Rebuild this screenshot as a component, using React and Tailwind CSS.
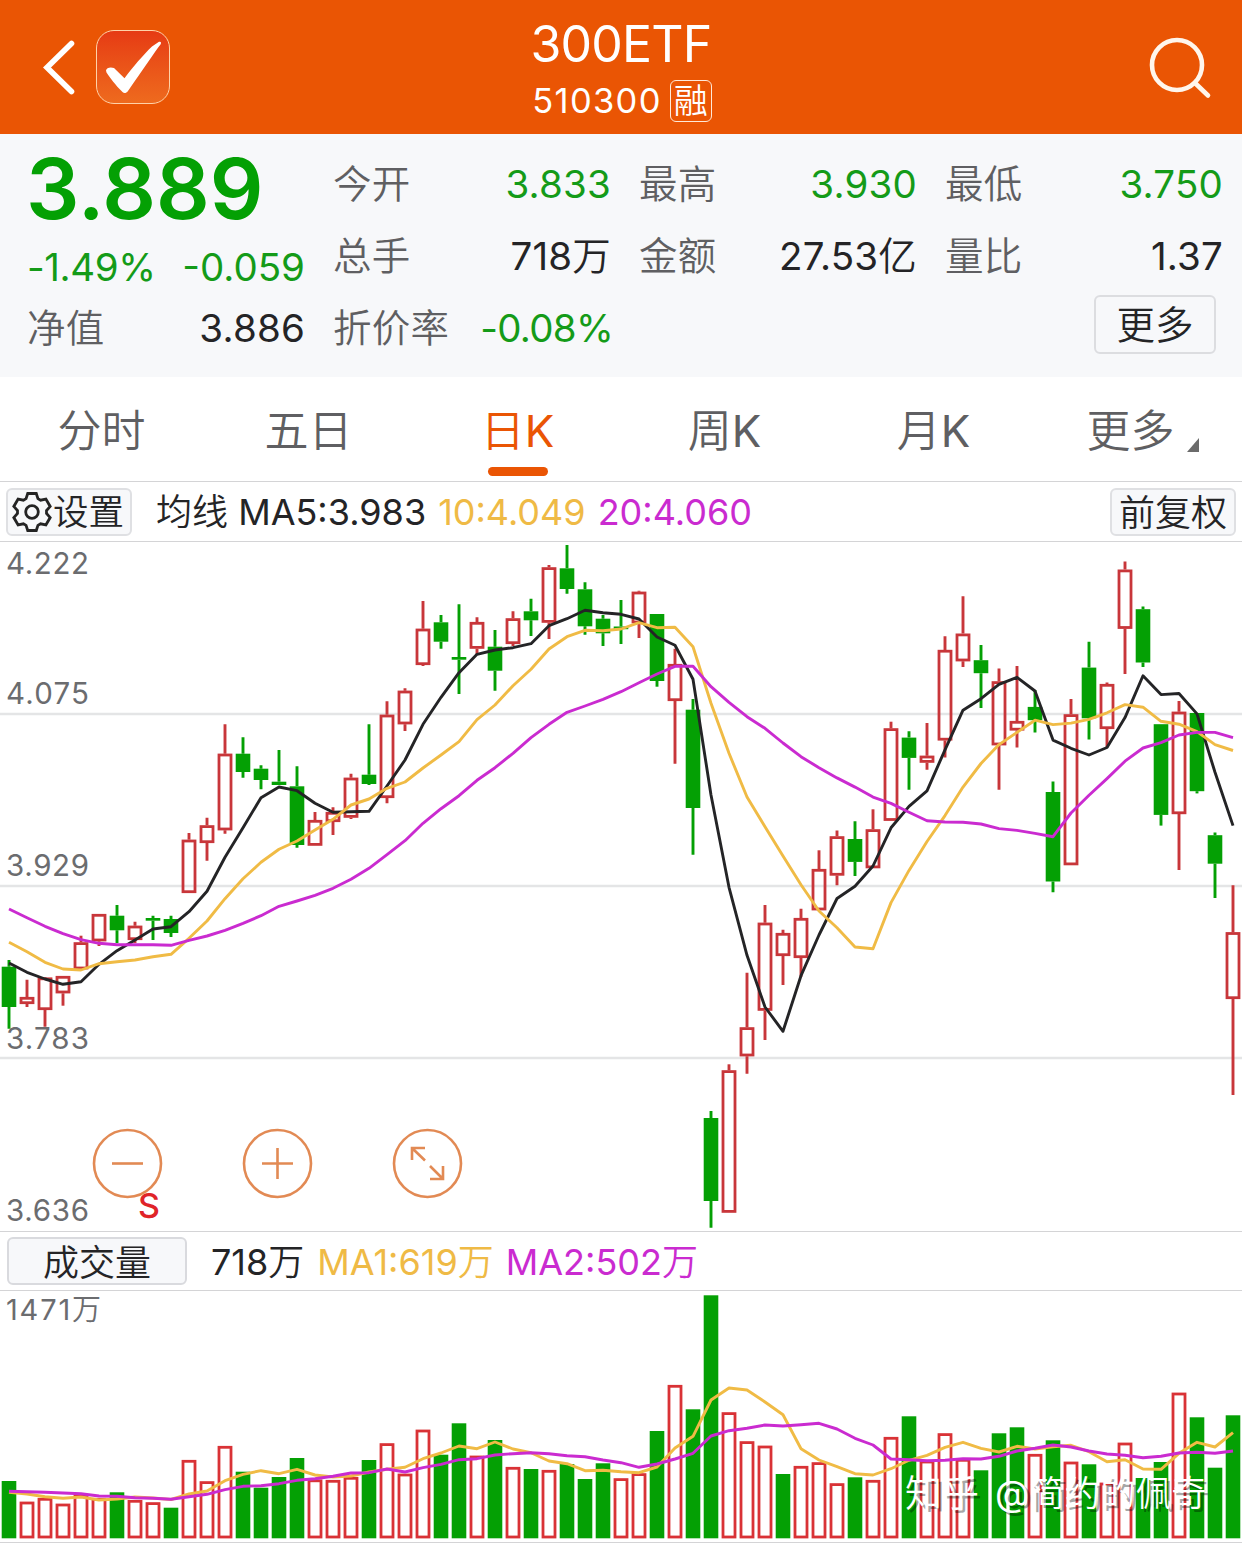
import { clsx } from 'clsx';

// [up, high, bodyTop, bodyBottom, low], vertical chart coordinates
const CANDLES = [
  [0, 960, 966.7, 1007, 1028.7], [1, 979.7, 997, 1004, 1007], [1, 977, 977.5, 1010, 1026.7],
  [1, 976, 976, 993.3, 1005.7], [1, 935.7, 942.3, 969.3, 969.3], [1, 914, 914, 941.3, 946],
  [0, 905, 915.7, 930.3, 943], [1, 921.7, 925.7, 940, 943], [0, 915.7, 918, 920.7, 940],
  [0, 915.7, 919, 933, 937], [1, 833, 839.7, 893, 893], [1, 817.7, 825.3, 843, 860.7],
  [1, 724.3, 753.7, 830.3, 833.7], [0, 737.3, 753.7, 772, 777.7], [0, 765.3, 768.7, 780, 789.3],
  [0, 750, 781.7, 785, 785], [0, 766.3, 786.3, 845, 847.7], [1, 812, 820, 845.7, 845.7],
  [1, 807.3, 812, 822, 835], [1, 773.7, 777.7, 817.7, 819], [0, 724.3, 774.7, 784, 785],
  [1, 701.3, 714.7, 798, 803.3], [1, 688.3, 690.7, 724.3, 731], [1, 601, 628.7, 665, 666],
  [0, 615, 622.3, 641.7, 648.7], [0, 604.3, 657, 659.7, 694], [1, 617.3, 622, 648.7, 654],
  [0, 630, 646.7, 670.7, 690.7], [1, 611.3, 618.3, 644, 646], [0, 598.7, 611.3, 620.3, 636],
  [1, 565, 567.3, 622.7, 639], [0, 545, 568.3, 589, 593.7], [0, 582.3, 589.3, 626.3, 634.7],
  [0, 615, 618.7, 633.3, 646], [0, 600, 626.5, 629.2, 644], [1, 590.7, 591.7, 623.3, 638],
  [0, 614, 614, 681, 686.7], [1, 648.7, 664, 701, 763.7], [0, 699, 709.7, 808, 854.7],
  [0, 1111, 1118, 1201, 1227.7], [1, 1064.3, 1070.3, 1212.7, 1212.7], [1, 972.7, 1027.3, 1056.3, 1073.7],
  [1, 905, 922.7, 1010.7, 1040], [1, 929.7, 933, 956, 985], [1, 908.7, 918, 958, 976.7],
  [1, 850.3, 869, 910.3, 910.3], [1, 830.4, 836.3, 875.6, 885.2], [0, 821.2, 839, 861.9, 876],
  [1, 809.3, 829.3, 868.2, 868.2], [1, 721.7, 728.3, 820.8, 820.8], [0, 731.3, 737.6, 757.9, 789.7],
  [1, 723, 755.7, 762.7, 769.7], [1, 636.2, 649.9, 740.5, 757.5], [1, 596.2, 633.6, 661.3, 667],
  [0, 645, 660.2, 673.2, 708], [1, 668.4, 681.3, 745.3, 789.7], [1, 666, 721, 730.5, 747.5],
  [0, 690, 706.9, 720.2, 732.4], [0, 781.6, 792, 881.5, 892.2], [1, 699, 714.3, 865.2, 865.2],
  [0, 641.7, 667.6, 718.3, 739.4], [1, 682.4, 684, 729, 747.5], [1, 561.5, 569.6, 628.8, 674],
  [0, 606.6, 609.2, 662.5, 667], [0, 724.2, 724.2, 814.9, 825.6], [1, 701, 711.7, 814.1, 870],
  [0, 713, 713, 791.2, 793.4], [0, 832.6, 835.2, 863.7, 898], [1, 885.2, 932.2, 999, 1095],
];

const MA5 = [
  963, 972.3, 979, 984.3, 981.7, 964.3, 950.7, 940, 929, 926.7, 911.7, 891.3, 857.3, 827.7, 797.7, 787,
  790.7, 803.3, 812.3, 811.7, 811.3, 786, 760, 724.3, 697.3, 672.7, 654.3, 650, 647.7, 643.7, 625.7, 618.7,
  610.3, 612.7, 614.3, 619, 637, 645.3, 679.3, 795, 887.3, 955.3, 1007, 1031.3, 975.7, 935, 898.5, 886.3,
  866, 827.8, 806.4, 790.8, 749.8, 710.2, 698.7, 684.3, 677.3, 691, 740.1, 748.3, 755, 747.5, 717.6, 675.8,
  694.6, 693.5, 713.9, 772.3, 825.6,
];

const MA10 = [
  942.3, 951.7, 962.3, 969, 970, 963.7, 961.7, 960, 956.7, 954.3, 938.3, 921, 898.7, 878.7, 862.3, 849.3,
  841, 830, 819.3, 805, 799, 788.3, 782, 768, 755, 741.7, 719.7, 705, 685.7, 669.3, 649, 636.7,
  630.3, 630.7, 629, 622.7, 627.7, 627.3, 646.7, 703.3, 753.3, 797, 826.7, 856, 884.7, 911, 927.7, 947,
  948.8, 902.6, 870.4, 841.5, 815.6, 787.1, 763.5, 744.6, 732.4, 720.2, 724.6, 723.1, 719.4, 712.8, 704.6, 707.2,
  721.3, 724.2, 731.6, 744.6, 750.5,
];

const MA20 = [
  909, 917.7, 926.3, 933.7, 939.7, 943.3, 944.7, 944.7, 944.7, 945.3, 940.3, 936, 930.3, 923.3, 915.7, 906.3,
  901, 895.3, 888.3, 879.3, 868.3, 854.7, 840.7, 823.3, 808.7, 795.7, 780.3, 767.7, 753.3, 737.7, 724.3, 712.3,
  706, 699.3, 691.7, 682.7, 674, 666.3, 666.3, 686.7, 702.3, 716.7, 728.3, 743, 756.7, 767.7, 777.9, 787.1,
  797.1, 803.4, 812.3, 820.8, 822, 822.3, 824, 828.6, 830.4, 833.4, 836.7, 813, 795.3, 778.6, 761.2, 748,
  742.7, 735, 732.4, 732.4, 737.6,
];

// top edge of every volume bar
const VOLUMES = [
  1481, 1501.7, 1498, 1503.7, 1494.5, 1498, 1492.3, 1500, 1502.3, 1507.7, 1460, 1481.3, 1446, 1471.7, 1487.7, 1477,
  1458, 1479.5, 1480, 1477, 1460, 1443.3, 1473.7, 1429.7, 1454.7, 1423.3, 1455.7, 1440, 1467, 1469, 1470, 1464,
  1479, 1463.3, 1478.3, 1473.3, 1431, 1385, 1409.3, 1295.3, 1412.3, 1441.3, 1445.7, 1474, 1466, 1462.3, 1483.3, 1477.3,
  1480, 1437, 1416.3, 1460.7, 1433.3, 1459, 1470.3, 1433.3, 1427.3, 1454, 1440.3, 1461.7, 1464.3, 1482.7, 1442.7, 1478,
  1462, 1392.7, 1417.3, 1467.7, 1415.3,
];

// days drawn as falling in the volume chart
const VOLUME_DOWN = new Set([
  0, 6, 9, 13, 14, 15, 16, 20, 24, 25, 27, 29, 31, 32, 33, 36, 38, 39, 43, 47, 50, 54, 55, 56, 58, 60, 63, 64, 66, 67, 68,
]);

const VOL_MA1 = [
  1492.3, 1494, 1496.7, 1498.3, 1497, 1500, 1499, 1497, 1498, 1499.5, 1494, 1491, 1480.7, 1474.3, 1470.7, 1473.7,
  1469.3, 1475, 1477, 1476, 1472, 1469.3, 1467.3, 1458.7, 1453, 1446, 1448.7, 1442, 1449, 1452.7, 1461, 1463.7,
  1470.7, 1470.3, 1471.7, 1472.7, 1467, 1448, 1436.3, 1400, 1388, 1390, 1402, 1414.7, 1448.7, 1460, 1466.7, 1473.7,
  1475, 1468.7, 1460.3, 1455.3, 1447.3, 1442.3, 1448.3, 1452, 1446.3, 1449, 1446.7, 1445.3, 1451.7, 1461.7, 1459.7, 1469,
  1469.3, 1453.3, 1442.3, 1447, 1432.7,
];

const VOL_MA2 = [
  1491.3, 1491.8, 1492.3, 1493, 1493.7, 1496, 1496.3, 1497.7, 1498.3, 1499.3, 1496.7, 1494.3, 1489.7, 1486.3, 1485.7, 1483.7,
  1480.3, 1478.7, 1476.3, 1473, 1472.7, 1469, 1472, 1467.7, 1464.3, 1459.7, 1458.7, 1455, 1453.7, 1452.7, 1453.7, 1455.7,
  1456.7, 1460, 1462.7, 1467.3, 1464, 1459, 1453.3, 1436, 1430.7, 1428.3, 1425, 1426, 1424.7, 1423.3, 1429, 1438.3,
  1445, 1459, 1459.7, 1460.7, 1460.3, 1458.7, 1459, 1456.3, 1451, 1448.3, 1445, 1447, 1451, 1454, 1455.3, 1457.7,
  1456.3, 1453, 1452.3, 1453.3, 1451,
];

const RED = '#c8363a';
const VOL_RED = '#d93236';
const GREEN = '#04a004';
const YELLOW = '#f0bb45';
const PURPLE = '#ca2bd0';

const AXIS_LABELS = [
  ['4.222', 574],
  ['4.075', 704],
  ['3.929', 876],
  ['3.783', 1049],
  ['3.636', 1221],
];

const TABS = ['分时', '五日', '日K', '周K', '月K', '更多'];

const centerX = (i) => 9 + i * 18;
const toPoints = (values) => values.map((y, i) => `${centerX(i)},${y}`).join(' ');

function Line({ values, color }) {
  return <polyline points={toPoints(values)} fill="none" stroke={color} strokeWidth="2.9" strokeLinejoin="round" />;
}

function Bar({ x, top, bottom, up, red = RED }) {
  if (!up) return <rect x={x - 7.3} y={top} width="14.6" height={bottom - top} fill={GREEN} />;
  return (
    <rect
      x={x - 6}
      y={top + 1.3}
      width="12"
      height={Math.max(bottom - top - 2.6, 0.5)}
      fill="none"
      stroke={red}
      strokeWidth="2.8"
    />
  );
}

function Candle({ x, data }) {
  const [up, high, top, bottom, low] = data;
  const color = up ? RED : GREEN;
  return (
    <g>
      <path d={`M${x} ${high}V${top}M${x} ${bottom}V${low}`} stroke={color} strokeWidth="2.9" />
      <Bar x={x} top={top} bottom={bottom} up={up} />
    </g>
  );
}

function GearIcon() {
  const points = [];
  for (let k = 0; k < 6; k++) {
    [[-24, 14.6], [-13, 19], [13, 19], [24, 14.6]].forEach(([offset, r]) => {
      const a = ((k * 60 - 90 + offset) * Math.PI) / 180;
      points.push(`${(21 + r * Math.cos(a)).toFixed(2)},${(21 + r * Math.sin(a)).toFixed(2)}`);
    });
  }
  return (
    <svg viewBox="0 0 42 42" className="h-[42px] w-[42px] shrink-0" fill="none" stroke="#242424" strokeWidth="2.8">
      <polygon points={points.join(' ')} strokeLinejoin="miter" />
      <circle cx="21" cy="21" r="6.3" />
    </svg>
  );
}

function Header() {
  return (
    <header className="grid h-[134px] grid-cols-[1fr_auto_1fr] bg-[#ea5504] text-white">
      <div className="flex items-center pl-10">
        <svg viewBox="0 0 40 60" className="h-[60px] w-10" fill="none" stroke="#fff" strokeWidth="5.6">
          <path d="M31.5 6.5 7 30.5 31.5 54.5" strokeLinecap="round" strokeLinejoin="miter" />
        </svg>
        <div className="ml-4 h-[74px] w-[74px] rounded-[18px] border border-[#ffd2a8] bg-linear-to-b from-[#e63a14] to-[#ee6a1e]">
          <svg viewBox="1 1 72 72" className="h-full w-full" fill="#fff">
            <path d="M10 40.500C10.500 38 14 36.500 18 38L28.500 48.300C36 38 48 24 56 16.500L63 11.800C65 11.200 65.500 12.500 64.500 14.500C58 23 46 41 32 61C30 63.500 28 63.500 26.500 62C19 54.500 14.500 48.500 10.500 42.500Z" />
          </svg>
        </div>
      </div>
      <div className="flex flex-col items-center">
        <h1 className="mt-[14px] h-[60px] text-[50px] leading-[60px] tracking-[-0.8px]">300ETF</h1>
        <div className="ml-0.5 flex h-[54px] items-center gap-2 text-[34.5px] leading-[54px] tracking-[1.3px]">
          510300
          <span className="flex h-[42px] w-[42px] items-center justify-center rounded-md border-[1.5px] border-[#ffe9d8] text-[34px] leading-none tracking-normal">
            融
          </span>
        </div>
      </div>
      <div className="flex items-center justify-end pr-[30px]">
        <svg viewBox="0 0 64 64" className="h-16 w-16" fill="none" stroke="#fff6ec" strokeWidth="4.6">
          <circle cx="29" cy="30" r="25" />
          <path d="M47 48 60 60.500" strokeLinecap="round" />
        </svg>
      </div>
    </header>
  );
}

function Stat({ label, value, green }) {
  return (
    <div className="flex h-[72px] items-center justify-between">
      <span className="-ml-px tracking-[0.2px] text-[#5f5f62]">{label}</span>
      <span
        className={clsx(
          value.endsWith('%') ? '-mr-0.5 tracking-[-0.7px]' : 'tracking-[0.2px]',
          green ? 'text-[#149b18]' : 'text-[#242426]'
        )}
      >
        {value}
      </span>
    </div>
  );
}

function Quote() {
  return (
    <section className="grid h-[243px] grid-cols-4 gap-x-[29px] bg-[#f7f8fa] pt-[14px] pr-[19px] pl-7 text-[38.5px] leading-[72px]">
      <div>
        <div className="-ml-0.5 h-[82px] text-[84px] leading-[82px] font-semibold text-[#04a004]">3.889</div>
        <div className="flex h-[62px] items-center justify-between pt-[12px] text-[#149b18]">
          <span className="-ml-px tracking-[-0.4px]">-1.49%</span>
          <span>-0.059</span>
        </div>
        <Stat label="净值" value="3.886" />
      </div>
      <div>
        <Stat label="今开" value="3.833" green />
        <Stat label="总手" value="718万" />
        <Stat label="折价率" value="-0.08%" green />
      </div>
      <div>
        <Stat label="最高" value="3.930" green />
        <Stat label="金额" value="27.53亿" />
      </div>
      <div>
        <Stat label="最低" value="3.750" green />
        <Stat label="量比" value="1.37" />
        <div className="flex justify-end pt-[3px] pr-[7px]">
          <button className="h-[59px] w-[122px] rounded-md border-2 border-[#dcdde0] leading-[54px] text-[#242426]">更多</button>
        </div>
      </div>
    </section>
  );
}

function Tabs() {
  return (
    <nav className="grid h-[105px] grid-cols-6 border-b border-[#d4d4d6] bg-white text-[44px] text-[#5f5f62]">
      {TABS.map((tab) => {
        const active = tab === '日K';
        return (
          <div key={tab} className={clsx('flex flex-col items-center', active && 'text-[#ea5504]')}>
            <div
              className={clsx(
                'flex h-[90px] items-center pt-[18px]',
                tab === '更多' && 'pl-2',
                (tab === '分时' || tab === '五日') && 'pr-1',
                tab === '月K' && 'pl-1'
              )}
            >
              {tab}
              {tab === '更多' && (
                <svg viewBox="0 0 12 14" className="mt-7 ml-3 h-[14px] w-3">
                  <path d="M12 0V14H0Z" fill="#6b6b6b" />
                </svg>
              )}
            </div>
            {active && <div className="h-[9px] w-[60px] rounded-full bg-[#ea5504]" />}
          </div>
        );
      })}
    </nav>
  );
}

function IndicatorBar() {
  return (
    <div className="flex h-[60px] items-center border-b border-[#d4d4d6] bg-white pr-[6px] pl-[6px] text-[36px] text-[#242426]">
      <button className="flex h-12 w-[126px] items-center rounded-md border-2 border-[#dfe0e3] bg-[#f7f8fa] pl-[3px] text-[35.5px] leading-none">
        <GearIcon />
        <span className="pt-0.5 whitespace-nowrap">设置</span>
      </button>
      <span className="ml-6 pt-px whitespace-nowrap">均线 MA5:3.983</span>
      <span className="ml-3 pt-px text-[#efba45]">10:4.049</span>
      <span className="ml-3 pt-px text-[#ca2bd0]">20:4.060</span>
      <button className="ml-auto h-12 w-[126px] rounded-md border-2 border-[#dfe0e3] bg-[#f7f8fa] pt-0.5 text-[36px] leading-none whitespace-nowrap">
        前复权
      </button>
    </div>
  );
}

function PriceChart() {
  return (
    <div className="h-[690px] border-b border-[#d4d4d6] bg-white">
      <svg viewBox="0 542 1242 689" className="block h-[689px] w-full">
        {[714, 886, 1058].map((y) => (
          <path key={y} d={`M0 ${y}H1242`} stroke="#e4e5e6" strokeWidth="2.5" />
        ))}
        {CANDLES.map((data, i) => (
          <Candle key={i} x={centerX(i)} data={data} />
        ))}
        <Line values={MA5} color="#242426" />
        <Line values={MA10} color={YELLOW} />
        <Line values={MA20} color={PURPLE} />
        {AXIS_LABELS.map(([label, y]) => (
          <text key={label} x="6" y={y} textLength="83" fontSize="29.500" fill="#6b6c6f">
            {label}
          </text>
        ))}
        <g fill="none" stroke="#e28a54" strokeWidth="2.6">
          <circle cx="127.500" cy="1163.500" r="33.500" />
          <path d="M112 1163.500H143" />
          <circle cx="277.500" cy="1163.500" r="33.500" />
          <path d="M262 1163.500H293M277.500 1148V1179" />
          <circle cx="427.500" cy="1163.500" r="33.500" />
          <path d="M412 1160V1148H425M412.500 1148.500 425 1160.500M443 1166V1179H430M442.500 1178.500 430 1166" />
        </g>
        <text x="138" y="1217.500" fontSize="34" fontWeight="500" fill="#e02428">
          S
        </text>
      </svg>
    </div>
  );
}

function VolumeBar() {
  return (
    <div className="flex h-[59px] items-center border-b border-[#d4d4d6] bg-white pl-[7px] text-[36px] text-[#242426]">
      <button className="h-12 w-[180px] rounded-md border-2 border-[#d9dade] bg-[#f7f8fa] pt-1 text-[36px] leading-none">
        成交量
      </button>
      <span className="ml-6 pt-px">718万</span>
      <span className="ml-[13px] pt-px text-[#efba45]">MA1:619万</span>
      <span className="ml-3 pt-px text-[#ca2bd0]">MA2:502万</span>
    </div>
  );
}

function VolumeChart() {
  return (
    <div className="relative h-[252px] border-b border-[#d4d4d6] bg-white">
      <svg viewBox="0 1291 1242 251" className="block h-[251px] w-full">
        <text x="6" y="1320" textLength="95" fontSize="29" fill="#6b6c6f">
          1471万
        </text>
        {VOLUMES.map((top, i) => (
          <Bar key={i} x={centerX(i)} top={top} bottom={1538.3} up={!VOLUME_DOWN.has(i)} red={VOL_RED} />
        ))}
        <Line values={VOL_MA1} color={YELLOW} />
        <Line values={VOL_MA2} color={PURPLE} />
      </svg>
      <div className="absolute top-[178px] left-[905px] flex items-center gap-4 text-[35.5px] leading-[50px] whitespace-nowrap text-white [text-shadow:3px_3px_0_rgba(0,0,0,0.35)]">
        <span className="text-[37px] font-medium">知乎</span>
        <span>@简约的佩奇</span>
      </div>
    </div>
  );
}

export default function App() {
  return (
    <main className="h-[1545px] w-[1242px] overflow-hidden bg-white font-[Inter,'Noto_Sans_CJK_SC_DemiLight','Noto_Sans_CJK_SC',sans-serif]">
      <Header />
      <Quote />
      <Tabs />
      <IndicatorBar />
      <PriceChart />
      <VolumeBar />
      <VolumeChart />
    </main>
  );
}
